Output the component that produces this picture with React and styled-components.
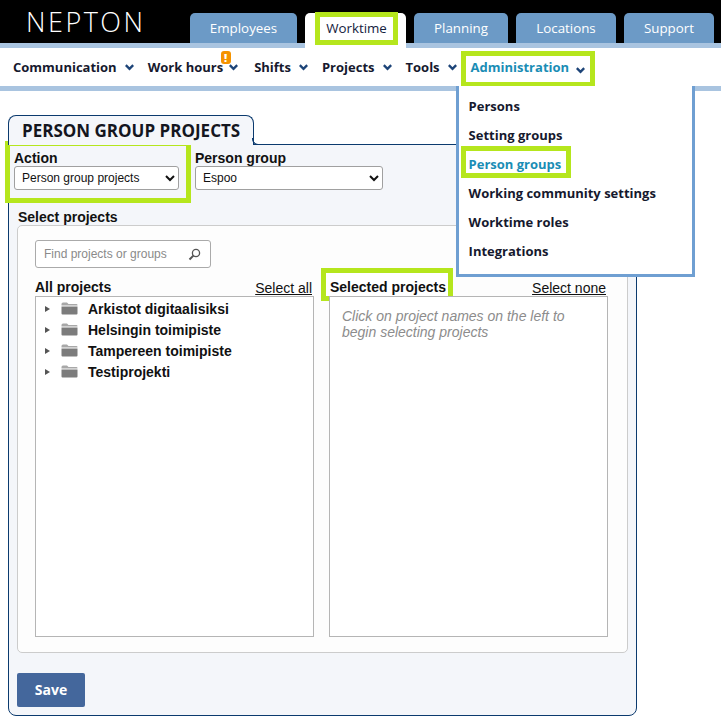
import styled, { createGlobalStyle } from "styled-components";

const GlobalStyle = createGlobalStyle`
  html, body {
    margin: 0;
    padding: 0;
    background: #fff;
  }
  * {
    box-sizing: border-box;
  }
`;

const LIME = "#b5e61d";
const ARIAL = `"Liberation Sans", Arial, sans-serif`;
const OPEN = `"Open Sans", "Noto Sans", sans-serif`;

const TABS = [
  { label: "Employees", width: 107 },
  { label: "Worktime", active: true },
  { label: "Planning", width: 94 },
  { label: "Locations", width: 100 },
  { label: "Support", width: 90 },
];

const MENU = [
  { label: "Communication" },
  { label: "Work hours", badge: true },
  { label: "Shifts" },
  { label: "Projects" },
  { label: "Tools" },
];

const ADMIN = ["Persons", "Setting groups", "Person groups", "Working community settings", "Worktime roles", "Integrations"];

const PROJECTS = ["Arkistot digitaalisiksi", "Helsingin toimipiste", "Tampereen toimipiste", "Testiprojekti"];

function Chevron() {
  return (
    <ChevronIcon width="9" height="7" viewBox="0 0 9 7">
      <path d="M0.8 1.2 L4.5 4.9 L8.2 1.2" fill="none" stroke="#1d4478" strokeWidth="2.4" />
    </ChevronIcon>
  );
}

function Folder() {
  return (
    <svg width="17" height="13" viewBox="0 0 17 13">
      <path d="M0.5 2 Q0.5 0.5 2 0.5 H6 L7.5 2 H15.5 Q16.5 2 16.5 3 V3.5 H0.5 Z" fill="#a8a8a8" />
      <path d="M0.5 4.5 H16.5 V11.5 Q16.5 12.5 15.5 12.5 H1.5 Q0.5 12.5 0.5 11.5 Z" fill="#7c7c7c" />
    </svg>
  );
}

export default function App() {
  return (
    <>
      <GlobalStyle />
      <TopBar>
        <Logo>NEPTON</Logo>
        <Tabs>
          {TABS.map((tab) =>
            tab.active ? (
              <ActiveTab key={tab.label}>
                <TabMark>{tab.label}</TabMark>
              </ActiveTab>
            ) : (
              <Tab key={tab.label} $width={tab.width}>{tab.label}</Tab>
            )
          )}
        </Tabs>
      </TopBar>

      <Nav>
        {MENU.map((item) => (
          <NavItem key={item.label} $hasBadge={item.badge}>
            {item.label}
            {item.badge && <Badge>!</Badge>}
            <Chevron />
          </NavItem>
        ))}
        <AdminItem>
          Administration
          <Chevron />
          <Dropdown>
            {ADMIN.map((label) => (
              <DropdownRow key={label}>
                {label === "Person groups" ? <CurrentLink>{label}</CurrentLink> : label}
              </DropdownRow>
            ))}
          </Dropdown>
        </AdminItem>
      </Nav>

      <Page>
        <CardTab>PERSON GROUP PROJECTS</CardTab>
        <Panel>
          <Filters>
            <ActionGroup>
              <FieldLabel>Action</FieldLabel>
              <Select $width={165} defaultValue="projects">
                <option value="projects">Person group projects</option>
              </Select>
            </ActionGroup>
            <FilterGroup>
              <FieldLabel>Person group</FieldLabel>
              <Select $width={188} defaultValue="espoo">
                <option value="espoo">Espoo</option>
              </Select>
            </FilterGroup>
          </Filters>

          <SectionLabel>Select projects</SectionLabel>
          <ProjectBox>
            <SearchBox>
              <SearchInput placeholder="Find projects or groups" />
              <svg width="13" height="13" viewBox="0 0 13 13">
                <circle cx="8" cy="5" r="3.6" fill="none" stroke="#555" strokeWidth="1.3" />
                <path d="M5.4 7.6 L1.5 11.5" stroke="#555" strokeWidth="2" />
              </svg>
            </SearchBox>
            <Columns>
              <Column>
                <ColumnHead>
                  <ColumnTitle>All projects</ColumnTitle>
                  <ColumnLink>Select all</ColumnLink>
                </ColumnHead>
                <ListBox>
                  {PROJECTS.map((name) => (
                    <TreeRow key={name}>
                      <Arrow />
                      <Folder />
                      <TreeName>{name}</TreeName>
                    </TreeRow>
                  ))}
                </ListBox>
              </Column>
              <Column>
                <ColumnHead>
                  <SelectedTitle>Selected projects</SelectedTitle>
                  <ColumnLink>Select none</ColumnLink>
                </ColumnHead>
                <ListBox>
                  <Hint>Click on project names on the left to begin selecting projects</Hint>
                </ListBox>
              </Column>
            </Columns>
          </ProjectBox>
          <SaveButton>Save</SaveButton>
        </Panel>
      </Page>
    </>
  );
}

const TopBar = styled.header`
  display: flex;
  align-items: flex-end;
  height: 48px;
  background: linear-gradient(#000 43px, #a9c4e0 43px);
`;

const Logo = styled.div`
  width: 190px;
  height: 48px;
  padding: 3px 0 0 26px;
  color: #fff;
  font-family: ${OPEN};
  font-size: 27px;
  font-weight: 350;
  line-height: 38px;
  letter-spacing: 2.5px;
`;

const Tabs = styled.nav`
  display: flex;
  align-items: flex-end;
  gap: 8px;
  height: 48px;
`;

const Tab = styled.div`
  display: flex;
  align-items: center;
  justify-content: center;
  width: ${(p) => p.$width}px;
  height: 30px;
  margin-bottom: 5px;
  background: #6c9ac6;
  border-radius: 5px 5px 0 0;
  color: #fff;
  font-family: ${OPEN};
  font-size: 13.33px;
`;

const ActiveTab = styled.div`
  display: flex;
  align-items: flex-start;
  height: 35px;
  padding: 4px 13px 0 15px;
  background: #fff;
  border-radius: 5px 5px 0 0;
`;

const TabMark = styled.div`
  width: 73px;
  height: 23px;
  outline: 5px solid ${LIME};
  color: #14213d;
  font-family: ${OPEN};
  font-size: 13.33px;
  line-height: 23px;
  text-align: center;
`;

const Nav = styled.div`
  display: flex;
  gap: 14px;
  height: 43px;
  padding-left: 13px;
  border-bottom: 5px solid #a9c4e0;
  font-family: ${OPEN};
  font-size: 13px;
  font-weight: 700;
  color: #16192e;
`;

const NavItem = styled.div`
  position: relative;
  display: flex;
  align-items: center;
  gap: ${(p) => (p.$hasBadge ? "6px" : "8px")};
  height: 38px;
  padding-right: ${(p) => (p.$hasBadge ? "2px" : "0")};
`;

const ChevronIcon = styled.svg`
  flex: none;
`;

const Badge = styled.span`
  position: absolute;
  top: 3px;
  left: 73px;
  width: 10px;
  height: 13px;
  background: #f59300;
  border-radius: 3px;
  color: #fff;
  font-size: 11px;
  font-weight: 800;
  line-height: 13px;
  text-align: center;
`;

const AdminItem = styled.div`
  position: relative;
  display: flex;
  align-items: center;
  gap: 7px;
  height: 26px;
  margin: 8px 0 0 -5px;
  padding: 0 5px 4px;
  outline: 5px solid ${LIME};
  color: #1a8db5;
  svg {
    margin-top: 7px;
  }
`;

const Dropdown = styled.div`
  position: absolute;
  top: 30px;
  left: -10px;
  z-index: 2;
  width: 239px;
  padding: 6px 0 8px 10px;
  background: #fff;
  border: 3px solid #6f9fd2;
  border-top: none;
  color: #16192e;
`;

const DropdownRow = styled.div`
  display: flex;
  align-items: flex-start;
  height: 29px;
  line-height: 29px;
`;

const CurrentLink = styled.span`
  height: 22px;
  margin: 1px 0 0 -3px;
  padding: 0 5px 0 3px;
  outline: 5px solid ${LIME};
  color: #1a8db5;
  line-height: 27px;
`;

const Page = styled.main`
  padding: 24px 0 10px 8px;
`;

const CardTab = styled.div`
  position: relative;
  z-index: 1;
  display: flex;
  align-items: center;
  width: 246px;
  height: 30px;
  margin-bottom: -1px;
  padding: 0 0 0 13px;
  background: #f4f6fa;
  border: 1px solid #0b3a6e;
  border-bottom: none;
  border-radius: 8px 8px 0 0;
  color: #14161f;
  font-family: ${OPEN};
  font-size: 17px;
  font-weight: 700;
  white-space: nowrap;
  &::after {
    content: "";
    position: absolute;
    left: 100%;
    bottom: 0;
    width: 5px;
    height: 6px;
    border-left: 1px solid #0b3a6e;
    border-bottom: 1px solid #0b3a6e;
    border-bottom-left-radius: 6px;
    margin-left: -1px;
  }
`;

const Panel = styled.section`
  width: 629px;
  padding: 1px 8px 8px 1px;
  background: #f4f6fa;
  border: 1px solid #0b3a6e;
  border-radius: 0 8px 8px 8px;
`;

const Filters = styled.div`
  display: flex;
  gap: 9px;
`;

const FilterGroup = styled.div`
  padding: 3px 0 8px;
`;

const ActionGroup = styled(FilterGroup)`
  width: 176px;
  padding: 3px 7px 8px 4px;
  outline: 5px solid ${LIME};
`;

const FieldLabel = styled.div`
  height: 17px;
  color: #111;
  font-family: ${ARIAL};
  font-size: 14px;
  font-weight: 700;
  line-height: 19px;
`;

const Select = styled.select`
  display: block;
  width: ${(p) => p.$width}px;
  height: 24px;
  padding-left: 3px;
  background: #fff;
  border: 1px solid #a0a0a0;
  border-radius: 3px;
  color: #111;
  font-family: ${ARIAL};
  font-size: 12px;
`;

const SectionLabel = styled(FieldLabel)`
  margin: 10px 0 0 8px;
`;

const ProjectBox = styled.div`
  width: 611px;
  margin-left: 7px;
  padding: 14px 19px 15px 17px;
  background: #fdfdfd;
  border: 1px solid #cccccc;
  border-radius: 5px;
`;

const SearchBox = styled.div`
  display: flex;
  align-items: center;
  justify-content: space-between;
  width: 176px;
  height: 28px;
  padding: 0 9px 0 8px;
  background: #fff;
  border: 1px solid #aaaaaa;
  border-radius: 3px;
`;

const SearchInput = styled.input`
  width: 140px;
  padding: 0;
  border: none;
  outline: none;
  background: transparent;
  font-family: ${ARIAL};
  font-size: 12px;
  &::placeholder {
    color: #8a8a8a;
    opacity: 1;
  }
`;

const Columns = styled.div`
  display: grid;
  grid-template-columns: 279px 279px;
  gap: 15px;
  margin-top: 10px;
`;

const Column = styled.div`
  display: flex;
  flex-direction: column;
`;

const ColumnHead = styled.div`
  display: flex;
  align-items: flex-end;
  justify-content: space-between;
  height: 18px;
  padding-right: 2px;
  font-family: ${ARIAL};
  font-size: 14px;
`;

const ColumnTitle = styled.span`
  color: #111;
  font-weight: 700;
  line-height: 18px;
`;

const SelectedTitle = styled(ColumnTitle)`
  width: 122px;
  height: 23px;
  margin-left: -3px;
  padding: 6px 0 0 4px;
  background: #fff;
  outline: 5px solid ${LIME};
  line-height: 17px;
  white-space: nowrap;
  align-self: flex-end;
`;

const ColumnLink = styled.a`
  color: #111;
  line-height: 16px;
  text-decoration: underline;
  cursor: pointer;
`;

const ListBox = styled.div`
  height: 341px;
  padding-top: 1px;
  background: #fff;
  border: 1px solid #b5b5b5;
`;

const TreeRow = styled.div`
  display: flex;
  align-items: center;
  height: 21px;
  padding-left: 9px;
`;

const Arrow = styled.span`
  width: 0;
  height: 0;
  margin-right: 11px;
  border-top: 3.5px solid transparent;
  border-bottom: 3.5px solid transparent;
  border-left: 5px solid #555;
`;

const TreeName = styled.span`
  margin-left: 10px;
  color: #111;
  font-family: ${ARIAL};
  font-size: 14px;
  font-weight: 700;
`;

const Hint = styled.p`
  margin: 10px 12px 0;
  color: #8c8c8c;
  font-family: ${ARIAL};
  font-size: 14px;
  font-style: italic;
  line-height: 16px;
`;

const SaveButton = styled.button`
  display: block;
  width: 68px;
  height: 34px;
  margin: 20px 0 0 7px;
  padding: 0 0 2px;
  background: #44679c;
  border: none;
  border-radius: 2px;
  color: #fff;
  font-family: ${OPEN};
  font-size: 14px;
  font-weight: 700;
`;
